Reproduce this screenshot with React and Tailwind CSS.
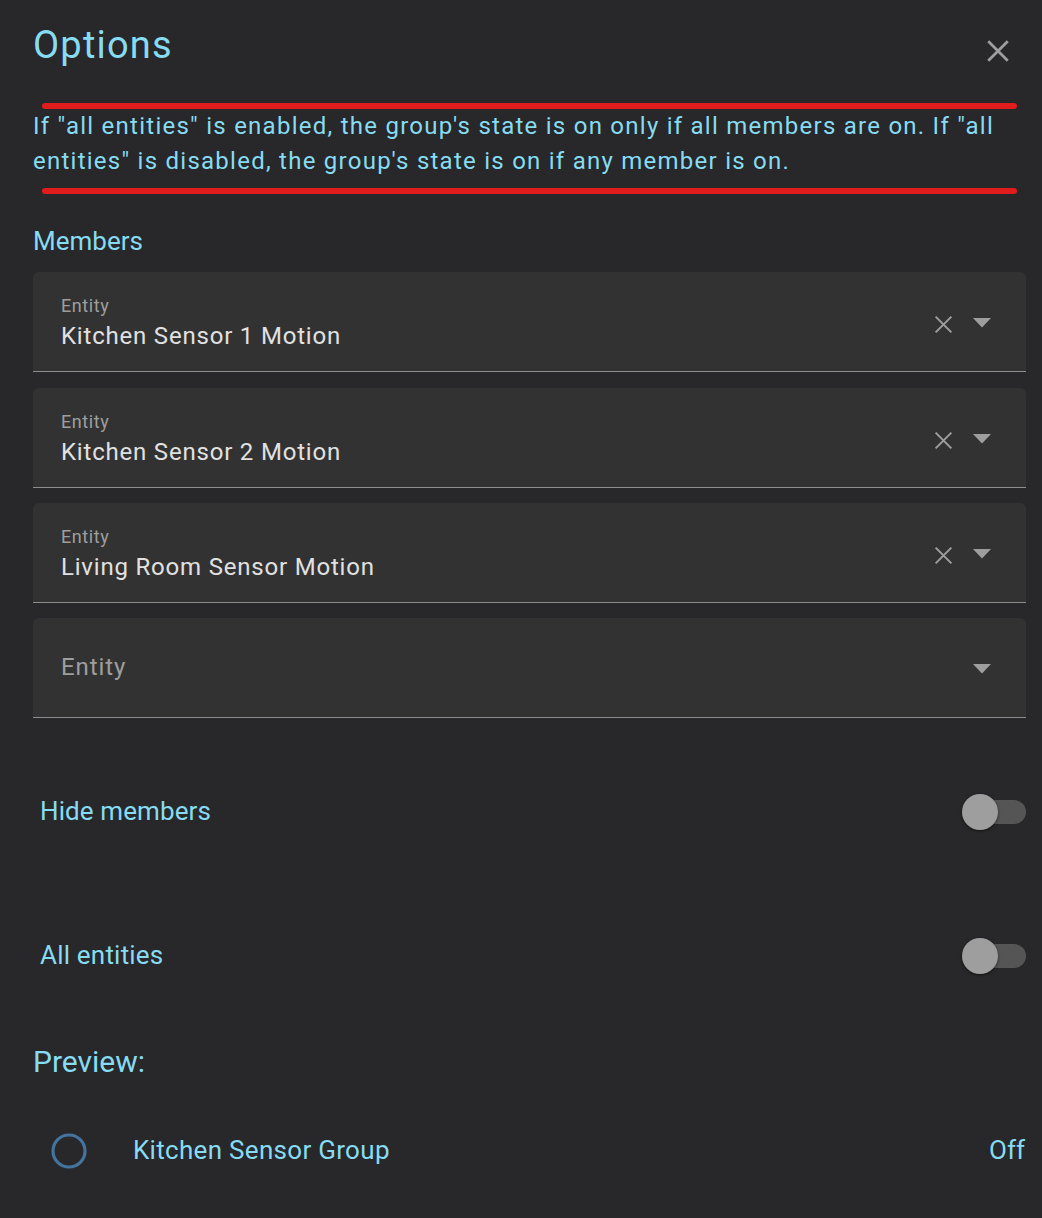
import React from "react";

const cyan = "text-[#86dcf2]";

function XIcon({ size = 21, stroke = 2.3 }) {
  return (
    <svg width={size} height={size} viewBox="0 0 24 24">
      <path d="M3 3 L21 21 M21 3 L3 21" stroke="#9e9e9e" strokeWidth={stroke} strokeLinecap="butt" fill="none" />
    </svg>
  );
}

function Caret() {
  return (
    <svg width="18" height="10" viewBox="0 0 18 10">
      <path d="M0 0 L18 0 L9 9.5 Z" fill="#9e9e9e" />
    </svg>
  );
}

function Field({ value, className = "" }) {
  return (
    <div className={`h-[100px] w-full rounded-t-[6px] bg-[#323232] border-b border-[#8d8d8d] flex ${className}`}>
      <div className="flex-1 pl-[28px]">
        {value ? (
          <>
            <div className="pt-[22px] text-[18px] leading-[24px] tracking-[0.6px] text-[#9e9e9e]">Entity</div>
            <div className="mt-[3px] text-[24px] leading-[30px] tracking-[0.8px] text-[#e1e1e1]">{value}</div>
          </>
        ) : (
          <div className="h-full flex items-center text-[24px] leading-[30px] tracking-[0.9px] text-[#9e9e9e]">Entity</div>
        )}
      </div>
      <div className="flex items-center pt-[4px] pr-[35px]">
        {value ? (
          <div className="mr-[19px] flex items-center mt-[3px]">
            <XIcon />
          </div>
        ) : null}
        <Caret />
      </div>
    </div>
  );
}

function Switch() {
  return (
    <div className="relative w-[64px] h-[36px]">
      <div className="absolute right-0 top-[6px] w-[54px] h-[24px] rounded-full bg-[#555555]" />
      <div className="absolute left-0 top-0 w-[36px] h-[36px] rounded-full bg-[#9e9e9e] shadow-[0_1px_3px_rgba(0,0,0,0.5)]" />
    </div>
  );
}

export default function App() {
  return (
    <div
      className="relative w-[1042px] h-[1218px] bg-[#282729] pl-[33px] pr-[16px] flex flex-col overflow-hidden"
      style={{ fontFamily: "Roboto, 'Liberation Sans', sans-serif" }}
    >
      {/* Header */}
      <div className="flex items-start justify-between pt-[22px]">
        <div className={`text-[38px] leading-[46px] tracking-[1.2px] ${cyan}`}>Options</div>
        <div className="mt-[16px] mr-[15px]">
          <XIcon size={26} stroke={2.6} />
        </div>
      </div>

      <div className={`mt-[41px] mr-[10px] text-[24px] leading-[35px] tracking-[1.25px] ${cyan}`}>
        If "all entities" is enabled, the group's state is on only if all members are on. If "all
        entities" is disabled, the group's state is on if any member is on.
      </div>

      <div className={`mt-[45.5px] text-[26px] leading-[32px] ${cyan}`}>Members</div>

      <div className="mt-[15px] flex flex-col">
        <Field value="Kitchen Sensor 1 Motion" />
        <Field value="Kitchen Sensor 2 Motion" className="mt-[16px]" />
        <Field value="Living Room Sensor Motion" className="mt-[15px]" />
        <Field className="mt-[15px]" />
      </div>

      <div className="mt-[70px] h-[48px] flex items-center justify-between pl-[7px]">
        <div className={`text-[26px] tracking-[0.1px] ${cyan}`}>Hide members</div>
        <Switch />
      </div>

      <div className="mt-[96px] h-[48px] flex items-center justify-between pl-[7px]">
        <div className={`text-[26px] tracking-[0.2px] ${cyan}`}>All entities</div>
        <Switch />
      </div>

      <div className={`mt-[64px] text-[30px] leading-[36px] ${cyan}`}>Preview:</div>

      <div className="mt-[47px] h-[48px] flex items-center">
        <div className="ml-[18px] w-[36px] h-[36px]">
          <svg width="36" height="36" viewBox="0 0 36 36">
            <circle cx="18" cy="18" r="16" stroke="#44739e" strokeWidth="3.2" fill="none" />
          </svg>
        </div>
        <div className={`ml-[46px] flex-1 text-[26px] tracking-[0.3px] ${cyan}`}>Kitchen Sensor Group</div>
        <div className={`text-[26px] pr-[1px] ${cyan}`}>Off</div>
      </div>

      {/* Red annotation lines */}
      <div className="absolute left-[42px] top-[103px] w-[975px] h-[6px] rounded-full bg-[#e01c1c]" />
      <div className="absolute left-[42px] top-[188px] w-[975px] h-[6px] rounded-full bg-[#e01c1c]" />
    </div>
  );
}
